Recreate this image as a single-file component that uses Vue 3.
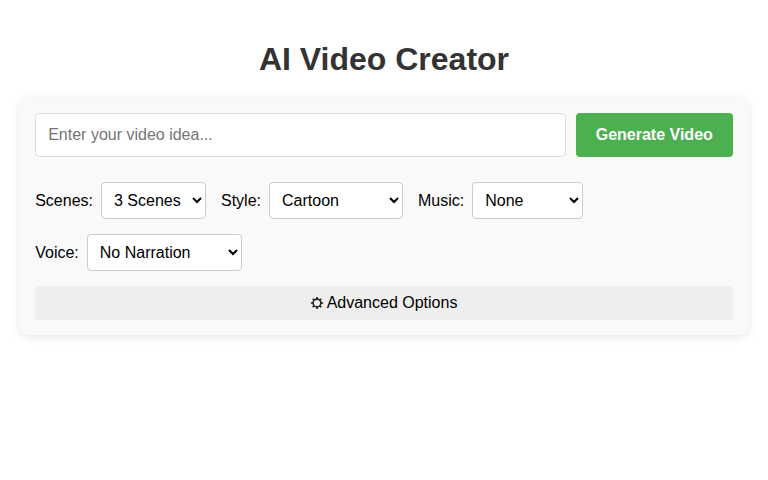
<script setup>
const fields = [
  { label: 'Scenes:', cls: 'w-scenes', options: ['3 Scenes', '5 Scenes', '7 Scenes'] },
  { label: 'Style:', cls: 'w-style', options: ['Cartoon', 'Realistic', 'Anime'] },
  { label: 'Music:', cls: 'w-music', options: ['None', 'Calm', 'Epic'] },
  { label: 'Voice:', cls: 'w-voice', options: ['No Narration', 'Male Voice', 'Female Voice'] },
]
</script>

<template>
  <div class="page">
    <h1 class="title">AI Video Creator</h1>
    <div class="card">
      <div class="prompt-row">
        <input class="prompt" type="text" placeholder="Enter your video idea..." />
        <button class="generate" type="button">Generate Video</button>
      </div>
      <div class="options">
        <div v-for="f in fields" :key="f.label" class="field">
          <label class="label">{{ f.label }}</label>
          <select class="select" :class="f.cls">
            <option v-for="o in f.options" :key="o">{{ o }}</option>
          </select>
        </div>
      </div>
      <button class="advanced" type="button">
        <svg class="gear" width="14" height="14" viewBox="0 0 14 14" aria-hidden="true">
          <circle cx="7" cy="7" r="3.9" fill="none" stroke="#222" stroke-width="1.6" />
          <path stroke="#222" stroke-width="1.6" d="M7 0.9V3M7 11V13.1M0.9 7H3M11 7H13.1M2.7 2.7L4.2 4.2M9.8 9.8L11.3 11.3M11.3 2.7L9.8 4.2M4.2 9.8L2.7 11.3" />
        </svg>
        <span>Advanced Options</span>
      </button>
    </div>
  </div>
</template>

<style>
html, body { margin: 0; background: #fff; }
</style>

<style scoped>
.page {
  box-sizing: border-box;
  width: 768px;
  height: 480px;
  padding: 19.2px;
  font-family: "Liberation Sans", Arial, sans-serif;
  color: #333;
}
.title {
  margin: 21.5px 0 19.2px;
  font-size: 32px;
  font-weight: 700;
  text-align: center;
  color: #333;
}
.card {
  background: #f9f9f9;
  border-radius: 10px;
  padding: 16px 16px 15px;
  box-shadow: 0 2px 8px rgba(0, 0, 0, 0.1);
}
.prompt-row {
  display: flex;
  gap: 10px;
}
.prompt {
  flex: 1;
  min-width: 0;
  box-sizing: border-box;
  height: 44px;
  padding: 12px;
  border: 1px solid #ddd;
  border-radius: 4px;
  background: #fff;
  font: 16px "Liberation Sans", Arial, sans-serif;
}
.generate {
  height: 44px;
  padding: 0 20px;
  border: 0;
  border-radius: 4px;
  background: #4caf50;
  color: #fff;
  font: 700 16px "Liberation Sans", Arial, sans-serif;
}
.options {
  display: flex;
  flex-wrap: wrap;
  gap: 15px;
  margin-top: 25px;
}
.field {
  display: flex;
  align-items: center;
  gap: 8px;
}
.label {
  padding-top: 1px;
  font-size: 16px;
  color: #000;
}
.select {
  box-sizing: border-box;
  height: 37px;
  padding: 8px;
  border: 1px solid #ccc;
  border-radius: 4px;
  background: #fff;
  color: #000;
  font: 16px "Liberation Sans", Arial, sans-serif;
}
.w-scenes { width: 105px; }
.w-style { width: 134px; }
.w-music { width: 111px; }
.w-voice { width: 155px; }
.advanced {
  display: flex;
  align-items: center;
  justify-content: center;
  gap: 3px;
  box-sizing: border-box;
  width: 100%;
  height: 34px;
  margin-top: 15px;
  padding: 0 1px 0 0;
  border: 0;
  border-radius: 4px;
  background: #eee;
  color: #000;
  font: 16px "Liberation Sans", Arial, sans-serif;
}
.gear { flex: none; margin-top: 1px; }
</style>
